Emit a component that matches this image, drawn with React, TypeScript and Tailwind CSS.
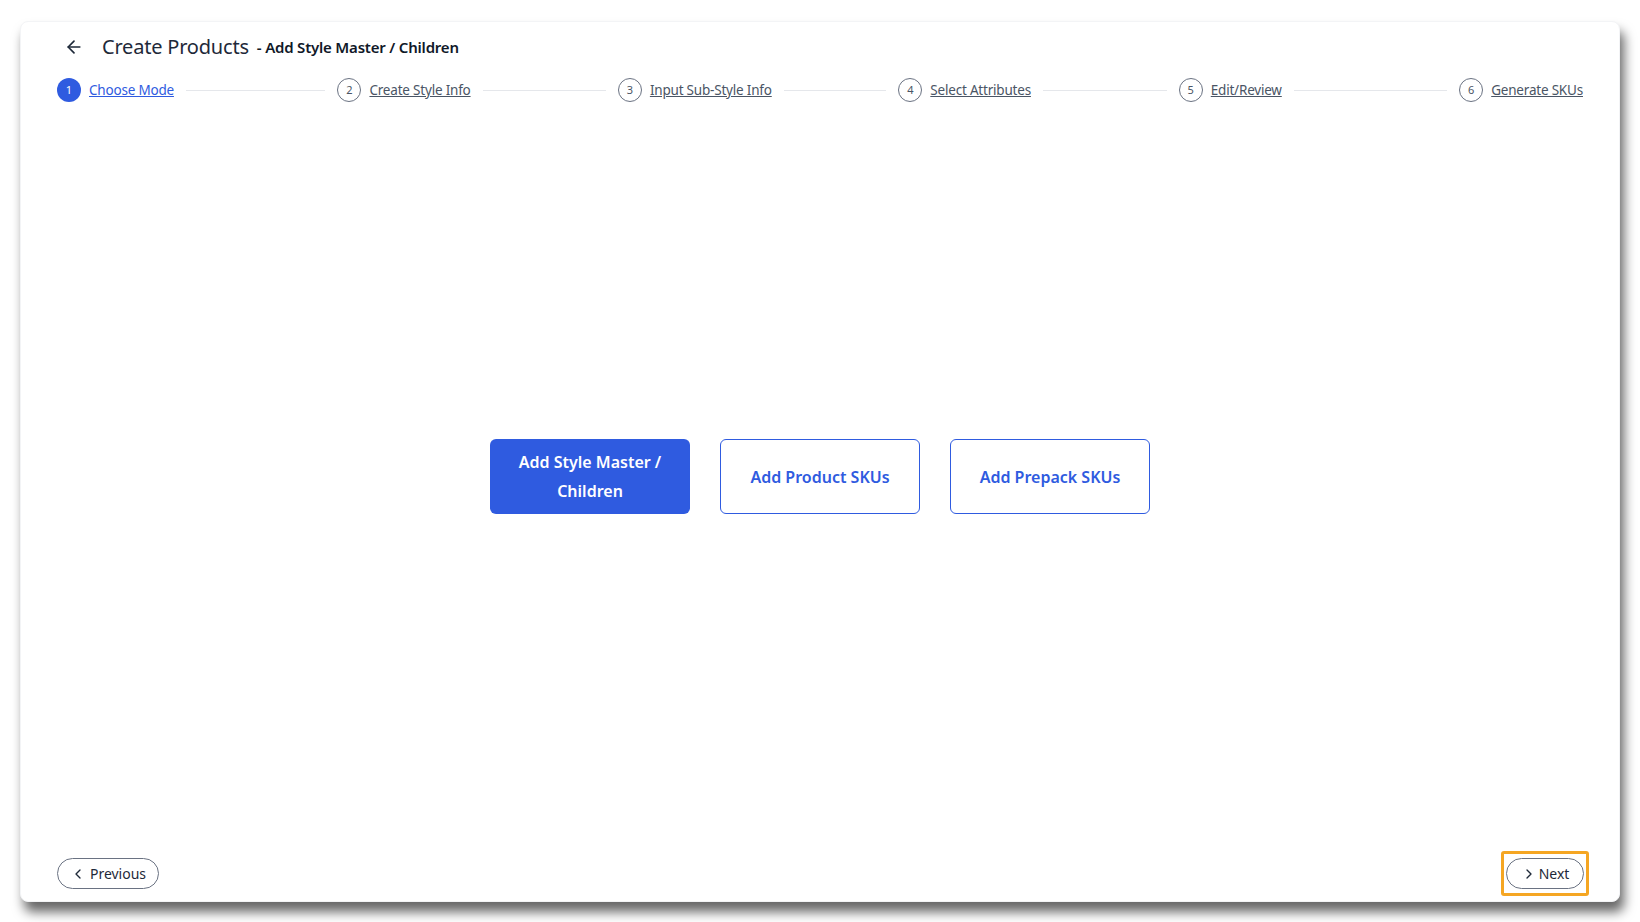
import { ArrowLeft, ChevronLeft, ChevronRight } from "lucide-react";

const steps = ["Choose Mode", "Create Style Info", "Input Sub-Style Info", "Select Attributes", "Edit/Review", "Generate SKUs"];

export default function App() {
  return (
    <div className="h-[922px] w-[1640px] bg-white pl-[20px] pt-[21px] font-['Noto_Sans',sans-serif]">
      <div className="flex h-[881px] w-[1600px] flex-col rounded-lg border border-gray-100 bg-white px-[36px] shadow-[4px_10px_12px_rgba(0,0,0,0.6)]">
        <div className="mt-[10px] flex items-center">
          <ArrowLeft className="ml-[7px] h-5 w-5 text-gray-800" strokeWidth={2} />
          <span className="ml-[18px] text-[20px] tracking-[-0.2px] text-gray-800">Create Products</span>
          <span className="ml-2 text-[15px] font-semibold tracking-[-0.2px] text-gray-900">- Add Style Master / Children</span>
        </div>

        <div className="mt-[16px] flex items-center">
          {steps.map((s, i) => (
            <div key={s} className={i < steps.length - 1 ? "flex flex-1 items-center" : "flex items-center"}>
              {i === 0 ? (
                <span className="flex h-[24px] w-[24px] items-center justify-center rounded-full bg-[#2f5be0] text-[11px] text-white">1</span>
              ) : (
                <span className="flex h-[24px] w-[24px] items-center justify-center rounded-full border border-gray-500 text-[11px] text-gray-600">{i + 1}</span>
              )}
              <span className={i === 0 ? "ml-2 text-[13.5px] tracking-[-0.2px] text-[#2f5be0] underline" : "ml-2 text-[13.5px] tracking-[-0.2px] text-gray-600 underline"}>{s}</span>
              {i < steps.length - 1 && <div className="mx-3 h-px flex-1 bg-gray-200" />}
            </div>
          ))}
        </div>

        <div className="flex flex-1 items-center justify-center gap-[30px]">
          <button className="h-[75px] w-[200px] rounded-md bg-[#2f5be0] px-6 text-[16px] font-semibold leading-[29px] text-white">Add Style Master / Children</button>
          <button className="h-[75px] w-[200px] rounded-md border border-[#2f5be0] text-[16px] font-semibold text-[#2f5be0]">Add Product SKUs</button>
          <button className="h-[75px] w-[200px] rounded-md border border-[#2f5be0] text-[16px] font-semibold text-[#2f5be0]">Add Prepack SKUs</button>
        </div>

        <div className="mb-[5px] flex items-center justify-between">
          <button className="flex h-[31px] w-[102px] items-center justify-center gap-1 rounded-full border border-gray-500 text-[14px] text-gray-800">
            <ChevronLeft className="h-4 w-4" /> Previous
          </button>
          <div className="mr-[-6px] rounded-[3px] border-[3px] border-[#f5a623] px-[2px] py-[4px]">
            <button className="flex h-[31px] w-[78px] items-center justify-center gap-0.5 rounded-full border border-gray-500 text-[14px] text-gray-800">
              <ChevronRight className="h-4 w-4" /> Next
            </button>
          </div>
        </div>
      </div>
    </div>
  );
}
